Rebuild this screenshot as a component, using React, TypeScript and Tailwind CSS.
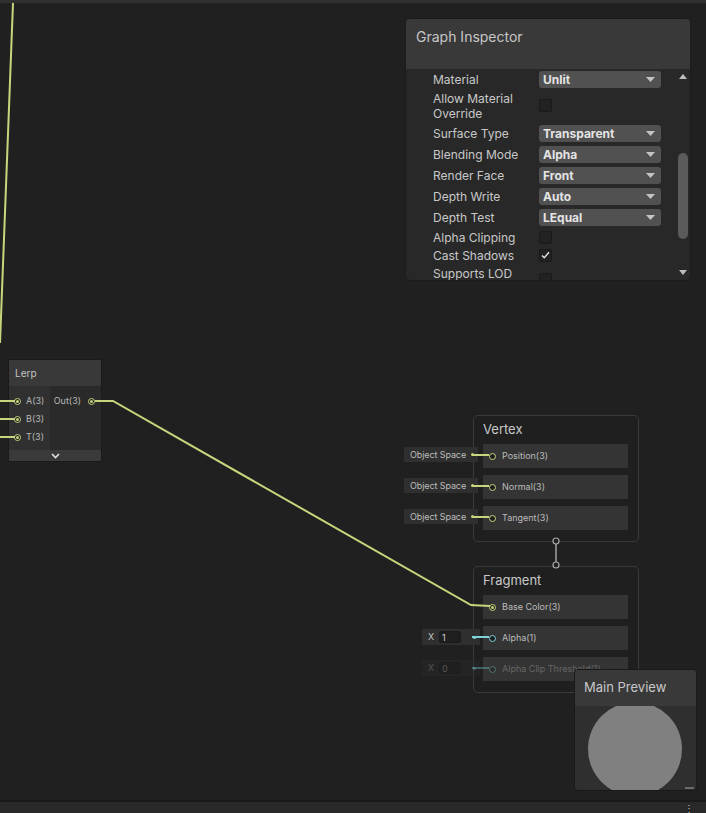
import { FunctionComponent } from "react";

const YELLOW = "#c9d57c";
const CYAN = "#7cd3dc";

type PortProps = { color?: string; filled?: boolean; dim?: boolean };

const Port: FunctionComponent<PortProps> = ({ color = YELLOW, filled = false, dim = false }) => (
  <span
    className={`w-[7px] h-[7px] shrink-0 rounded-full border-[1.5px] flex items-center justify-center bg-[#1e1e1e] ${dim ? "opacity-40" : ""}`}
    style={{ borderColor: color }}
  >
    {filled && <span className="w-[3px] h-[3px] rounded-full" style={{ background: color }} />}
  </span>
);

const Dropdown: FunctionComponent<{ value: string }> = ({ value }) => (
  <div className="w-[122px] h-[17px] rounded-[3px] bg-[#515151] flex items-center justify-between pl-[4px] pr-[6px] text-[12px] font-bold text-[#e4e4e4] leading-none">
    <span>{value}</span>
    <svg width="9" height="5" viewBox="0 0 9 5">
      <path d="M0 0 H9 L4.5 5 Z" fill="#c4c4c4" />
    </svg>
  </div>
);

const Checkbox: FunctionComponent<{ checked?: boolean }> = ({ checked = false }) => (
  <div className="w-[13px] h-[13px] rounded-[2px] bg-[#222222] border border-[#1a1a1a] flex items-center justify-center">
    {checked && (
      <svg width="9" height="8" viewBox="0 0 9 8">
        <path d="M1 4.5 L3.3 6.8 L8 1.2" stroke="#e6e6e6" strokeWidth="1.4" fill="none" />
      </svg>
    )}
  </div>
);

const InspectorRow: FunctionComponent<{ label: string; h: string; children: React.ReactNode }> = ({ label, h, children }) => (
  <div className={`flex items-center ${h}`}>
    <div className="w-[106px] text-[12px] leading-[15px] text-[#c8c8c8]">{label}</div>
    {children}
  </div>
);

const GraphInspector = () => (
  <div className="absolute left-[405px] top-[15px] w-[286px] h-[263px] rounded-[5px] overflow-hidden border border-[#1b1b1b] flex flex-col">
    <div className="h-[50px] shrink-0 bg-[#393939] px-[10px] pt-[7px] text-[14px] text-[#c6c6c6]">Graph Inspector</div>
    <div className="flex-1 bg-[#282828] flex flex-row min-h-0">
      <div className="flex-1 pl-[27px] flex flex-col overflow-hidden">
        <InspectorRow label="Material" h="h-[21px] shrink-0">
          <Dropdown value="Unlit" />
        </InspectorRow>
        <div className="flex items-center h-[33px] shrink-0">
          <div className="w-[106px] text-[12px] leading-[15px] text-[#c8c8c8] -mt-[2px]">
            Allow Material
            <br />
            Override
          </div>
          <div className="-mt-[3px]">
            <Checkbox />
          </div>
        </div>
        <InspectorRow label="Surface Type" h="h-[21px] shrink-0">
          <Dropdown value="Transparent" />
        </InspectorRow>
        <InspectorRow label="Blending Mode" h="h-[21px] shrink-0">
          <Dropdown value="Alpha" />
        </InspectorRow>
        <InspectorRow label="Render Face" h="h-[21px] shrink-0">
          <Dropdown value="Front" />
        </InspectorRow>
        <InspectorRow label="Depth Write" h="h-[21px] shrink-0">
          <Dropdown value="Auto" />
        </InspectorRow>
        <InspectorRow label="Depth Test" h="h-[21px] shrink-0">
          <Dropdown value="LEqual" />
        </InspectorRow>
        <InspectorRow label="Alpha Clipping" h="h-[18px] shrink-0">
          <Checkbox />
        </InspectorRow>
        <InspectorRow label="Cast Shadows" h="h-[18px] shrink-0">
          <Checkbox checked />
        </InspectorRow>
        <InspectorRow label="Supports LOD" h="h-[18px] shrink-0">
          <div className="mt-[12px]">
            <Checkbox />
          </div>
        </InspectorRow>
      </div>
      <div className="w-[12px] mr-[1px] flex flex-col items-center py-[4px]">
        <svg width="8" height="6" viewBox="0 0 8 6">
          <path d="M0 6 L4 1 L8 6 Z" fill="#bdbdbd" />
        </svg>
        <div className="h-[74px] shrink-0" />
        <div className="w-[10px] h-[86px] rounded-full bg-[#5b5b5b]" />
        <div className="flex-1" />
        <svg width="8" height="6" viewBox="0 0 8 6">
          <path d="M0 0 L8 0 L4 5 Z" fill="#bdbdbd" />
        </svg>
      </div>
    </div>
  </div>
);

const LerpNode = () => (
  <div className="absolute left-[9px] top-[357px] w-[92px] h-[101px] flex flex-col bg-[#2a2a2a] shadow-[0_0_0_1px_#1a1a1a]">
    <div className="h-[26px] shrink-0 bg-[#393939] pl-[6px] flex items-center text-[10px] text-[#c4c4c4]">Lerp</div>
    <div className="flex-1 flex flex-row">
      <div className="w-[41px] bg-[#303030] pt-[6px] flex flex-col">
        {["A(3)", "B(3)", "T(3)"].map((l) => (
          <div key={l} className="h-[18px] flex items-center gap-[5px] pl-[5px] text-[9px] text-[#b8b8b8]">
            <Port filled />
            <span>{l}</span>
          </div>
        ))}
      </div>
      <div className="flex-1 pt-[6px]">
        <div className="h-[18px] flex items-center justify-end gap-[7px] pr-[6px] text-[9px] text-[#b8b8b8]">
          <span>Out(3)</span>
          <Port filled />
        </div>
      </div>
    </div>
    <div className="h-[11px] shrink-0 bg-[#3a3a3a] flex items-center justify-center">
      <svg width="9" height="6" viewBox="0 0 9 6">
        <path d="M1 1 L4.5 4.5 L8 1" stroke="#e0e0e0" strokeWidth="1.6" fill="none" />
      </svg>
    </div>
  </div>
);

type SlotProps = { label: string; color?: string; filled?: boolean; dim?: boolean };

const Slot: FunctionComponent<SlotProps> = ({ label, color, filled, dim }) => (
  <div className={`h-[24px] bg-[#343434] flex items-center gap-[6px] pl-[6px] text-[9px] whitespace-nowrap overflow-hidden ${dim ? "text-[#666666]" : "text-[#bcbcbc]"}`}>
    <Port color={color} filled={filled} dim={dim} />
    <span>{label}</span>
  </div>
);

const MasterBlock: FunctionComponent<{ title: string; top: string; slots: SlotProps[] }> = ({ title, top, slots }) => (
  <div className={`absolute left-[473px] ${top} w-[166px] rounded-[5px] border border-[#3a3a3a] bg-[#1f1f1f] flex flex-col pl-[9px] pr-[10px] pb-[11px]`}>
    <div className="h-[28px] flex items-center text-[13px] text-[#c8c8c8]">{title}</div>
    <div className="flex flex-col gap-[7px]">
      {slots.map((s) => (
        <Slot key={s.label} {...s} />
      ))}
    </div>
  </div>
);

const ObjectSpace: FunctionComponent<{ top: string }> = ({ top }) => (
  <div className={`absolute left-[404px] ${top} w-[74px] h-[15px] bg-[#2f2f2f] flex items-center justify-between pl-[6px] pr-[4px] text-[9px] tracking-[-0.1px] text-[#bdbdbd]`}>
    <span>Object Space</span>
    <span className="w-[3px] h-[3px] rounded-full" style={{ background: YELLOW }} />
  </div>
);

const VectorInput: FunctionComponent<{ top: string; value: string; dim?: boolean }> = ({ top, value, dim }) => (
  <div className={`absolute left-[422px] ${top} w-[58px] h-[16px] bg-[#2f2f2f] flex items-center pl-[6px] pr-[4px] text-[9px] ${dim ? "opacity-30" : ""}`}>
    <span className="text-[#c4c4c4] w-[11px]">X</span>
    <span className="w-[22px] h-[12px] rounded-[2px] bg-[#1e1e1e] border border-[#1a1a1a] text-[#d4d4d4] pl-[2px] leading-[11px]">{value}</span>
    <span className="flex-1" />
    <span className="w-[3px] h-[3px] rounded-full" style={{ background: CYAN }} />
  </div>
);

const MainPreview = () => (
  <div className="absolute left-[574px] top-[666px] w-[123px] h-[122px] rounded-[4px] overflow-hidden border border-[#1a1a1a] flex flex-col">
    <div className="h-[36px] shrink-0 bg-[#393939] pl-[9px] flex items-center text-[13px] text-[#c8c8c8]">Main Preview</div>
    <div className="flex-1 bg-[#2f2f2f] relative overflow-hidden flex justify-center">
      <div className="w-[94px] h-[94px] shrink-0 rounded-full bg-[#808080] -mt-[4px] ml-[-2px]" />
      <div className="absolute right-[2px] bottom-[1px] w-[9px] h-[2px] bg-[#6a6a6a]" />
    </div>
  </div>
);

const Wires = () => (
  <svg className="absolute inset-0 pointer-events-none" width="706" height="797">
    <path d="M13 0 L0 340" stroke={YELLOW} strokeWidth="2" fill="none" />
    <path d="M0 398 H15 M0 416 H15 M0 434 H15" stroke={YELLOW} strokeWidth="2" />
    <path d="M95 398 H113 L471 602 L490 603" stroke={YELLOW} strokeWidth="2" fill="none" />
    <path d="M472 452 H489 M472 483 H489 M472 514 H489" stroke={YELLOW} strokeWidth="2" />
    <path d="M472 634 H489" stroke={CYAN} strokeWidth="2" />
    <path d="M472 665 H489" stroke={CYAN} strokeWidth="2" opacity="0.35" />
    <path d="M556 541 V559" stroke="#9a9a9a" strokeWidth="1.6" />
    <circle cx="556" cy="538" r="3" stroke="#a8a8a8" strokeWidth="1.2" fill="#1f1f1f" />
    <circle cx="556" cy="562" r="3" stroke="#a8a8a8" strokeWidth="1.2" fill="#1f1f1f" />
  </svg>
);

export default function App() {
  return (
    <div className="w-[706px] h-[813px] flex flex-col bg-[#202020] overflow-hidden" style={{ fontFamily: "Inter, 'Noto Sans', sans-serif" }}>
      <div className="h-[3px] shrink-0 bg-[#303030]" />
      <div className="flex-1 relative overflow-hidden">
        <LerpNode />
        <MasterBlock
          title="Vertex"
          top="top-[412px]"
          slots={[{ label: "Position(3)" }, { label: "Normal(3)" }, { label: "Tangent(3)" }]}
        />
        <MasterBlock
          title="Fragment"
          top="top-[563px]"
          slots={[
            { label: "Base Color(3)", filled: true },
            { label: "Alpha(1)", color: CYAN },
            { label: "Alpha Clip Threshold(1)", color: CYAN, dim: true },
          ]}
        />
        <ObjectSpace top="top-[444px]" />
        <ObjectSpace top="top-[475px]" />
        <ObjectSpace top="top-[506px]" />
        <VectorInput top="top-[626px]" value="1" />
        <VectorInput top="top-[657px]" value="0" dim />
        <Wires />
        <GraphInspector />
        <MainPreview />
      </div>
      <div className="h-[13px] shrink-0 border-t-2 border-[#191919] bg-[#282828] flex items-center justify-end pr-[12px]">
        <span className="text-[10px] leading-none text-[#c4c4c4]">⋮</span>
      </div>
    </div>
  );
}
